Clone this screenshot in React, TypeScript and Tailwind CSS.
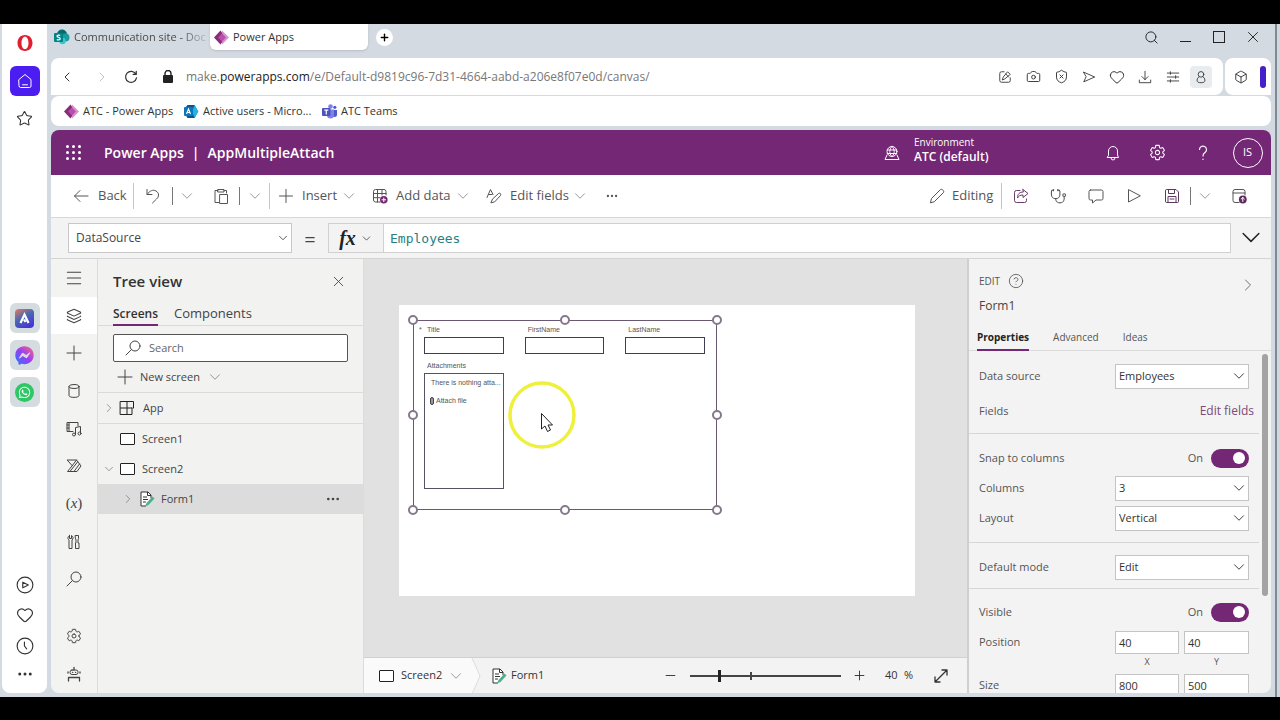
import { type ReactNode, useState } from "react"
import {
  Box,
  Camera,
  ChevronDown,
  ChevronLeft,
  ChevronRight,
  CircleHelp,
  Ellipsis,
  Heart,
  Layers,
  Menu,
  Minus,
  Plus,
  Search,
  ShieldX,
  Star,
  Stethoscope,
  X,
} from "lucide-react"
import { FaFacebookMessenger, FaWhatsapp } from "react-icons/fa"
import { IoSettingsOutline } from "react-icons/io5"

interface IconProps {
  children: ReactNode
  size?: number
  className?: string
}

// 16-unit line icon, drawn with the current text colour
const Icon = ({ children, size = 16, className }: IconProps) => (
  <svg
    width={size}
    height={size}
    viewBox="0 0 16 16"
    fill="none"
    stroke="currentColor"
    strokeLinecap="round"
    strokeLinejoin="round"
    aria-hidden="true"
    className={`shrink-0 ${className ?? ""}`}
  >
    {children}
  </svg>
)

const OperaLogo = () => (
  <svg width="18" height="18" viewBox="0 0 18 18" aria-hidden="true">
    <path
      fill="#e0202f"
      fillRule="evenodd"
      d="M9 1c4.600 0 7.500 3.600 7.500 8S13.600 17 9 17 1.500 13.400 1.500 9 4.400 1 9 1Zm0 1.800C7 2.800 5.500 5.500 5.500 9s1.500 6.200 3.500 6.200 3.500-2.700 3.500-6.200-1.500-6.200-3.500-6.200Z"
    />
  </svg>
)

const PowerAppsLogo = () => (
  <svg width="15" height="15" viewBox="0 0 15 15" className="shrink-0" aria-hidden="true">
    <path fill="#8b2a7d" d="M6.500.4 0 7.500l6.500 7.100L9 11V4Z" />
    <path fill="#d892cf" d="m8 .4 7 7.100-7 7.100Z" />
    <path fill="#b652a6" d="m8 3.200 3.900 4.300L8 11.800 4.200 7.500Z" />
  </svg>
)

const SharePointLogo = () => (
  <svg width="16" height="16" viewBox="0 0 16 16" className="shrink-0" aria-hidden="true">
    <circle cx="8" cy="5.500" r="5" fill="#036c70" />
    <circle cx="11.500" cy="8.500" r="4" fill="#1a9ba1" />
    <circle cx="8.500" cy="12" r="3.200" fill="#37c6d0" />
    <rect y="4" width="9" height="9" rx="1" fill="#038387" />
    <path
      d="M6.200 6.600C5.400 6 3 5.900 3 7.300s3.200.9 3.200 2.400-2.500 1.300-3.400.7"
      fill="none"
      stroke="#fff"
      strokeWidth="1.200"
    />
  </svg>
)

const AdminLogo = () => (
  <svg width="15" height="15" viewBox="0 0 15 15" className="shrink-0" aria-hidden="true">
    <path fill="#0b5394" d="M3.500 1h7L14 7.500 10.500 14h-7L1 10V4Z" />
    <path fill="#28b0e0" d="M10.500 1 14.500 7.500 10.500 14 8 7.500Z" />
    <rect y="3" width="9" height="9" rx="1" fill="#0a78b8" />
    <path d="m2.500 10 2-5 2 5M3.200 8.500h2.600" fill="none" stroke="#fff" strokeWidth="1.100" />
  </svg>
)

const TeamsLogo = () => (
  <svg width="15" height="15" viewBox="0 0 15 15" className="shrink-0" aria-hidden="true">
    <circle cx="8.500" cy="2.500" r="2.300" fill="#7b83eb" />
    <circle cx="12.800" cy="3.300" r="1.600" fill="#5059c9" />
    <path fill="#5059c9" d="M10 6h5v4.500a2.500 2.500 0 0 1-5 0Z" />
    <path fill="#7b83eb" d="M5 5.500h7V11a3.500 3.500 0 0 1-7 0Z" />
    <rect y="4" width="8.500" height="8" rx="1" fill="#4b53bc" />
    <path d="M2.300 6.200h4M4.300 6.200v4.200" stroke="#fff" strokeWidth="1.200" />
  </svg>
)

const FormIcon = () => (
  <svg width="15" height="16" viewBox="0 0 15 16" className="shrink-0" fill="none" aria-hidden="true">
    <path d="M11 7V4L8 1H1v14h5" stroke="#333" fill="#fff" />
    <path d="M7.500 1v3.500H11M3 6h4M3 8.500h5M3 11h3" stroke="#333" />
    <path d="m12.500 5.500 2 2-6 6.500-3.500 1.500 1.500-3.500Z" fill="#4fae91" />
  </svg>
)

const ScreenIcon = () => (
  <span className="h-3 w-[15px] shrink-0 rounded-[1px] border border-[#222] bg-white" />
)

const IconButton = ({
  label,
  className,
  children,
}: {
  label: string
  className: string
  children: ReactNode
}) => (
  <button type="button" aria-label={label} className={`flex shrink-0 items-center justify-center ${className}`}>
    {children}
  </button>
)

const BrowserSidebar = () => (
  <nav className="flex w-[45px] shrink-0 flex-col items-center rounded-b-lg bg-white pb-[6px] text-[#333]">
    <IconButton label="Opera menu" className="h-[38px] w-full">
      <OperaLogo />
    </IconButton>
    <IconButton label="Home" className="mt-1 size-[30px] rounded-md bg-[#4b1df0] text-white">
      <Icon>
        <path d="M2 6.500 8 1.500l6 5V13a1.500 1.500 0 0 1-1.500 1.500h-9A1.500 1.500 0 0 1 2 13ZM5.500 11.800h5" />
      </Icon>
    </IconButton>
    <IconButton label="Favourites" className="mt-1 h-[37px] w-full">
      <Star size={17} strokeWidth={1.5} />
    </IconButton>

    <div className="mt-[166px] flex flex-col gap-[7px]">
      <IconButton label="Aria" className="size-[30px] rounded-md bg-[#d4dce0]">
        <svg width="19" height="19" viewBox="0 0 19 19" aria-hidden="true">
          <defs>
            <linearGradient id="aria" x1="0" y1="0" x2="0.600" y2="1">
              <stop offset="0" stopColor="#e87a5c" />
              <stop offset="0.500" stopColor="#4c68b0" />
              <stop offset="1" stopColor="#4636d8" />
            </linearGradient>
          </defs>
          <rect width="19" height="19" rx="4" fill="url(#aria)" />
          <path d="M5.500 14 9.500 5.500l4 8.500M9 10.500l1.500 2.500" fill="none" stroke="#fff" strokeWidth="2.200" />
        </svg>
      </IconButton>
      <IconButton label="Messenger" className="size-[30px] rounded-md bg-[#d4dce0]">
        <svg width="0" height="0" className="absolute" aria-hidden="true">
          <defs>
            <linearGradient id="messenger" x1="0" y1="1" x2="1" y2="0">
              <stop offset="0" stopColor="#1f7bff" />
              <stop offset="0.500" stopColor="#9a3df5" />
              <stop offset="1" stopColor="#ff6a7a" />
            </linearGradient>
          </defs>
        </svg>
        <FaFacebookMessenger size={19} fill="url(#messenger)" />
      </IconButton>
      <IconButton label="WhatsApp" className="size-[30px] rounded-md bg-[#d4dce0]">
        <span className="flex size-[19px] items-center justify-center rounded-full bg-[#2fc765] text-white">
          <FaWhatsapp size={13} />
        </span>
      </IconButton>
    </div>

    <div className="mt-auto flex flex-col">
      <IconButton label="Player" className="h-[30px] w-8">
        <Icon size={18}>
          <circle cx="8" cy="8" r="7" />
          <path d="M6 5.500v5L11 8Z" />
        </Icon>
      </IconButton>
      <IconButton label="Pinboards" className="h-[30px] w-8">
        <Heart size={18} strokeWidth={1.5} />
      </IconButton>
      <IconButton label="History" className="h-[31px] w-8">
        <Icon size={18}>
          <circle cx="8" cy="8" r="7" />
          <path d="M7.500 4.500V8l2 2.500" />
        </Icon>
      </IconButton>
      <IconButton label="More" className="h-[26px] w-8">
        <Ellipsis size={18} />
      </IconButton>
    </div>
  </nav>
)

const TabStrip = () => (
  <div className="flex h-[34px] shrink-0 items-start text-[11px] text-[#444]">
    <button type="button" className="ml-[3px] flex h-[26px] w-[153px] items-center gap-1">
      <SharePointLogo />
      <span className="bg-gradient-to-r from-[#444] from-80% to-[#44444433] bg-clip-text whitespace-nowrap text-transparent">
        Communication site - Doc
      </span>
    </button>
    <button
      type="button"
      className="ml-[3px] flex h-[26px] w-[158px] items-center gap-1 rounded-b-md bg-white pl-1 text-[#333] shadow"
    >
      <PowerAppsLogo />
      Power Apps
    </button>
    <IconButton label="New tab" className="mt-[5px] ml-2 size-[17px] rounded-full bg-white text-black">
      <Plus size={11} strokeWidth={3} />
    </IconButton>
    <div className="ml-auto flex pr-px text-[#222]">
      <IconButton label="Search tabs" className="h-[26px] w-[34px]">
        <Search size={15} strokeWidth={1.5} />
      </IconButton>
      <IconButton label="Minimize" className="h-[26px] w-[34px]">
        <span className="mt-[9px] h-px w-[11px] bg-[#222]" />
      </IconButton>
      <IconButton label="Maximize" className="h-[26px] w-[34px]">
        <span className="size-[12px] border border-[#222]" />
      </IconButton>
      <IconButton label="Close" className="h-[26px] w-[34px]">
        <X size={18} strokeWidth={1.250} />
      </IconButton>
    </div>
  </div>
)

const AddressBar = () => (
  <div className="flex h-[37px] shrink-0 gap-[2px] text-[#333]">
    <div className="flex flex-1 items-center rounded-t-lg rounded-br-lg bg-white pr-2">
      <IconButton label="Back" className="ml-1 h-6 w-6">
        <ChevronLeft size={16} strokeWidth={1.5} />
      </IconButton>
      <IconButton label="Forward" className="ml-[11px] h-6 w-6 text-[#c4c4c4]">
        <ChevronRight size={16} strokeWidth={1.5} />
      </IconButton>
      <IconButton label="Reload" className="ml-[5px] h-6 w-6">
        <Icon size={14}>
          <path strokeWidth="1.400" d="M13.500 4.500A6.300 6.300 0 1 0 14.300 9M14 1.500v3.500h-3.500" />
        </Icon>
      </IconButton>
      <svg width="12" height="13" viewBox="0 0 12 13" className="ml-[19px] shrink-0" aria-hidden="true">
        <rect x="1" y="5" width="10" height="8" rx="1" fill="#222" />
        <path d="M3 5.500V3.500a3 3 0 0 1 6 0v2" fill="none" stroke="#222" strokeWidth="1.400" />
      </svg>
      <p className="ml-3 flex-1 whitespace-nowrap text-[12px] text-[#777]">
        make.<span className="text-[#222]">powerapps.com</span>/e/Default-d9819c96-7d31-4664-aabd-a206e8f07e0d/canvas/
      </p>
      <IconButton label="Edit page" className="h-6 w-7">
        <Icon size={14}>
          <path d="M7 2H4a2 2 0 0 0-2 2v8a2 2 0 0 0 2 2h8a2 2 0 0 0 2-2V9M5 11l1-3 5-6 3 3-6 5ZM9 4.500 12 8" />
        </Icon>
      </IconButton>
      <IconButton label="Snapshot" className="h-6 w-7">
        <Camera size={15} strokeWidth={1.5} />
      </IconButton>
      <IconButton label="Ad blocker" className="h-6 w-7">
        <ShieldX size={15} strokeWidth={1.5} />
      </IconButton>
      <IconButton label="Flow" className="h-6 w-7">
        <Icon size={14}>
          <path d="M2 2.500 14.500 8 2 13.500 4.500 8Z" />
        </Icon>
      </IconButton>
      <IconButton label="Add to pinboard" className="h-6 w-7">
        <Heart size={16} strokeWidth={1.5} />
      </IconButton>
      <IconButton label="Downloads" className="h-6 w-7">
        <Icon size={14}>
          <path d="M8 1.500V11M4.500 7.500 8 11l3.500-3.500M1.500 11.500v3h13v-3" />
        </Icon>
      </IconButton>
      <IconButton label="Easy setup" className="h-6 w-7">
        <Icon size={14}>
          <path d="M1.500 3.500h13M1.500 8h13M1.500 12.500h13M5 2v3M11 6.500v3M5 11v3" />
        </Icon>
      </IconButton>
      <IconButton label="Account" className="h-6 w-7">
        <span className="flex size-[22px] items-center justify-center rounded bg-[#e9ecee]">
          <Icon size={14}>
            <circle cx="8" cy="5" r="3.200" />
            <path d="M5.500 8A4 4 0 0 0 3.500 11.500C3.500 14 5 14.500 8 14.500s4.500-.5 4.500-3A4 4 0 0 0 10.500 8" />
          </Icon>
        </span>
      </IconButton>
    </div>
    <div className="flex w-[46px] items-center rounded-t-lg rounded-bl-lg bg-white pl-1">
      <IconButton label="Extensions" className="h-6 w-6">
        <Box size={14} strokeWidth={1.600} />
      </IconButton>
      <span className="ml-[7px] h-[22px] w-[6px] rounded-full bg-[#4420c8]" />
    </div>
  </div>
)

const Bookmarks = () => (
  <div className="mt-px flex h-[30px] shrink-0 items-center rounded-lg bg-white pl-[13px] text-[11px] text-[#333]">
    <a href="#atc" className="flex w-[120px] items-center gap-1 whitespace-nowrap">
      <PowerAppsLogo />
      ATC - Power Apps
    </a>
    <a href="#users" className="flex w-[138px] items-center gap-1 whitespace-nowrap">
      <AdminLogo />
      Active users - Micro...
    </a>
    <a href="#teams" className="flex items-center gap-1 whitespace-nowrap">
      <TeamsLogo />
      ATC Teams
    </a>
  </div>
)

const AppHeader = () => (
  <header className="mt-1 flex h-[45px] shrink-0 items-center rounded-t-lg bg-[#742774] text-white">
    <button type="button" aria-label="App launcher" className="ml-[15px] grid grid-cols-3 gap-[3px]">
      {[0, 1, 2, 3, 4, 5, 6, 7, 8].map((n) => (
        <span key={n} className="size-[3px] rounded-full bg-white" />
      ))}
    </button>
    <h1 className="ml-[23px] flex gap-2 text-[14px] font-semibold">
      <span>Power Apps</span>
      <span>|</span>
      <span>AppMultipleAttach</span>
    </h1>
    <button type="button" className="ml-auto flex w-[206px] items-center gap-[14px] text-left">
      <Icon>
        <circle cx="8" cy="6.500" r="5" />
        <path d="M8 1.500c-3 3-3 7 0 10 3-3 3-7 0-10ZM3.300 5h9.400M3.300 8.500h9.400M3 10l-2 4.500h14L13 10" />
      </Icon>
      <span className="flex flex-col pb-[6px]">
        <span className="text-[10px] leading-[14px]">Environment</span>
        <span className="text-[12px] leading-4 font-semibold">ATC (default)</span>
      </span>
    </button>
    <IconButton label="Notifications" className="h-full w-[45px]">
      <Icon>
        <path d="M2.500 12.500h11L12.500 10V6a4.500 4.500 0 0 0-9 0v4ZM6 13a2 2 0 0 0 4 0" />
      </Icon>
    </IconButton>
    <IconButton label="Settings" className="h-full w-[45px]">
      <IoSettingsOutline size={17} />
    </IconButton>
    <IconButton label="Help" className="h-full w-[45px]">
      <Icon>
        <path strokeWidth="1.200" d="M4.500 4.500a3.500 3.500 0 1 1 5.500 3C8.500 8.500 8 9 8 11M8 14v.5" />
      </Icon>
    </IconButton>
    <IconButton label="Account" className="mr-px h-full w-[45px]">
      <span className="flex size-[30px] items-center justify-center rounded-full border border-white text-[11px]">IS</span>
    </IconButton>
  </header>
)

const TallRule = () => <span className="h-[26px] w-px shrink-0 bg-[#c4c4c4]" />
const ShortRule = () => <span className="h-[18px] w-px shrink-0 bg-[#777]" />

const Chevron = () => <ChevronDown size={18} strokeWidth={1} className="-mx-px shrink-0 text-[#777]" />

const CommandBar = () => (
  <div className="flex h-[43px] shrink-0 items-center border-b border-[#d8d8d8] bg-white text-[13px] text-[#555]">
    <button type="button" className="ml-[22px] flex w-[60px] items-center gap-[9px]">
      <Icon>
        <path d="M15 8H1.500M7 2.500 1.500 8 7 13.500" />
      </Icon>
      Back
    </button>
    <TallRule />
    <IconButton label="Undo" className="w-[38px]">
      <Icon>
        <path d="M2 1.500V6.500H7M2 6.500C5 2.500 8 1.300 11 3c3.500 2 3 6 .5 8L7.500 15" />
      </Icon>
    </IconButton>
    <ShortRule />
    <IconButton label="Undo options" className="w-7">
      <Chevron />
    </IconButton>
    <IconButton label="Paste" className="ml-3 w-4">
      <Icon>
        <path d="M5 2.500H2v12h4M11 2.500h2.500V5M5 1.500h6v2.500H5ZM7 6.500h7.500v9H7Z" />
      </Icon>
    </IconButton>
    <span className="w-[10px]" />
    <ShortRule />
    <IconButton label="Paste options" className="w-[29px]">
      <Chevron />
    </IconButton>
    <TallRule />
    <button type="button" className="ml-2 flex w-[94px] items-center">
      <Icon>
        <path d="M8 1.500v13M1.500 8h13" />
      </Icon>
      <span className="ml-2 w-[39px] text-left">Insert</span>
      <Chevron />
    </button>
    <button type="button" className="flex w-[114px] items-center">
      <Icon>
        <path d="M8 14H3.500A2 2 0 0 1 1.500 12V3.500a2 2 0 0 1 2-2H12a2 2 0 0 1 2 2V7M1.500 5.500H14M1.500 9.700H8M5.500 1.500V14M10 1.500V7" />
        <circle cx="11.800" cy="11.800" r="3.800" fill="#742774" stroke="none" />
        <path stroke="#fff" d="M11.800 10v3.600M10 11.800h3.600" />
      </Icon>
      <span className="ml-2 w-[59px] text-left whitespace-nowrap">Add data</span>
      <Chevron />
    </button>
    <button type="button" className="flex w-[118px] items-center">
      <Icon>
        <path d="m1 9.500 3.500-8 2.500 5M2.500 6.500H6M5 14.500l1.500-3.500 6-5.500c1.500-1 3 .5 2 2L9 13.500Z" />
      </Icon>
      <span className="ml-2 w-[62px] text-left whitespace-nowrap">Edit fields</span>
      <Chevron />
    </button>
    <IconButton label="More commands" className="w-4">
      <Ellipsis size={14} />
    </IconButton>

    <button type="button" className="ml-auto flex w-[72px] items-center gap-[7px]">
      <Icon>
        <path d="m1.500 14.500 1-4 9-9c1.500-1 4 1.500 3 3l-9 9Z" />
      </Icon>
      Editing
    </button>
    <TallRule />
    <IconButton label="Share" className="w-[37px] text-[#6b3a6b]">
      <Icon>
        <path d="M7 2.500H3.500a2 2 0 0 0-2 2v8a2 2 0 0 0 2 2h8a2 2 0 0 0 2-2V11M10 1.500l5 4-5 4V7c-3 0-4.500 1-5.500 3 0-4 2-6 5.500-6Z" />
      </Icon>
    </IconButton>
    <IconButton label="App checker" className="w-[38px]">
      <Stethoscope size={17} strokeWidth={1.5} />
    </IconButton>
    <IconButton label="Comments" className="w-[38px]">
      <Icon>
        <path d="M2.500 2h11a1.500 1.500 0 0 1 1.500 1.500v7a1.500 1.500 0 0 1-1.500 1.500H8l-3.500 3v-3h-2A1.500 1.500 0 0 1 1 10.500v-7A1.500 1.500 0 0 1 2.500 2Z" />
      </Icon>
    </IconButton>
    <IconButton label="Preview" className="w-[38px]">
      <Icon>
        <path d="M2.500 2v12L14 8Z" />
      </Icon>
    </IconButton>
    <IconButton label="Save" className="w-[37px] text-[#5c3a5c]">
      <Icon>
        <path d="M1.500 2.500a1 1 0 0 1 1-1H12L14.500 4v9.500a1 1 0 0 1-1 1h-11a1 1 0 0 1-1-1ZM4.500 1.500v4h6v-4M4 14.500v-6h8v6M6 11h4" />
      </Icon>
    </IconButton>
    <ShortRule />
    <IconButton label="Save options" className="w-7">
      <Chevron />
    </IconButton>
    <IconButton label="Publish" className="mr-[14px] ml-[2px] w-9">
      <Icon>
        <path d="M8 14.500H4a2 2 0 0 1-2-2v-9a2 2 0 0 1 2-2h8a2 2 0 0 1 2 2V7M2 5h12" />
        <circle cx="11.800" cy="11.500" r="3.900" fill="#5c2a5c" stroke="none" />
        <path stroke="#fff" d="M11.800 13.500v-4M10.200 11l1.600-1.500 1.600 1.500" />
      </Icon>
    </IconButton>
  </div>
)

const FormulaBar = () => {
  const [formula, setFormula] = useState("Employees")

  return (
    <div className="flex h-[41px] shrink-0 items-center border-b border-[#d4d4d4] bg-[#f3f3f3] pl-[17px] text-[#444]">
      <div className="grid h-[30px] w-[224px] shrink-0 items-center border border-[#c8c8c8] bg-white">
        <select
          aria-label="Property"
          className="col-start-1 row-start-1 h-full w-full appearance-none pl-[7px] text-[12px] outline-none"
        >
          <option>DataSource</option>
        </select>
        <ChevronDown
          size={14}
          strokeWidth={1.5}
          className="pointer-events-none col-start-1 row-start-1 mr-px justify-self-end"
        />
      </div>
      <span className="w-9 shrink-0 pt-1 text-center text-[20px] leading-none">=</span>
      <button
        type="button"
        aria-label="Functions"
        className="flex h-[30px] w-[56px] shrink-0 items-center justify-center gap-1 border border-[#d0d0d0]"
      >
        <span className="font-['Liberation_Serif',serif] text-[20px] leading-none font-bold text-[#222] italic">fx</span>
        <ChevronDown size={13} strokeWidth={1.5} />
      </button>
      <input
        aria-label="Formula"
        value={formula}
        onChange={(e) => setFormula(e.target.value)}
        className="h-[30px] min-w-0 flex-1 border border-l-0 border-[#d0d0d0] bg-white px-[6px] font-['DejaVu_Sans_Mono',monospace] text-[13px] text-[#2a8080] outline-none"
      />
      <IconButton label="Expand formula bar" className="w-10 text-[#222]">
        <Icon size={18}>
          <path strokeWidth="1.300" d="m1 4 7 7 7-7" />
        </Icon>
      </IconButton>
    </div>
  )
}

const RailButton = ({ label, active, children }: { label: string; active?: boolean; children: ReactNode }) => (
  <IconButton label={label} className={`min-h-0 w-full flex-1 ${active ? "bg-white" : ""}`}>
    {children}
  </IconButton>
)

const LeftRail = () => (
  <nav className="flex w-[47px] shrink-0 flex-col border-r border-[#dcdcdc] bg-[#f3f3f2] text-[#444]">
    <div className="flex h-[339px] flex-col">
      <RailButton label="Menu">
        <Menu size={20} strokeWidth={1.250} />
      </RailButton>
      <RailButton label="Tree view" active>
        <Layers size={16} strokeWidth={1.600} />
      </RailButton>
      <RailButton label="Insert">
        <Icon>
          <path d="M8 1v14M1 8h14" />
        </Icon>
      </RailButton>
      <RailButton label="Data">
        <Icon>
          <ellipse cx="8" cy="3.500" rx="5" ry="2" />
          <path d="M3 3.500v9c0 2.500 10 2.500 10 0v-9" />
        </Icon>
      </RailButton>
      <RailButton label="Media">
        <Icon>
          <path d="M7 10.500H1v-9h11V5M3 1.500v9M1 4h2M1 7h2M9.500 13V6.500l5-1V12" />
          <circle cx="8" cy="13.500" r="1.500" />
          <circle cx="13.500" cy="12.500" r="1.500" />
        </Icon>
      </RailButton>
      <RailButton label="Power Automate">
        <Icon>
          <path d="M1.500 2H10.500L15 8l-4 5.500H1.500L6 8ZM6 8 10.500 2M4 13.500l7.500-9.500M8 13.500 13.500 6" />
        </Icon>
      </RailButton>
      <RailButton label="Variables">
        <span className="font-['Liberation_Serif',serif] text-[15px] leading-none">
          (<i>x</i>)
        </span>
      </RailButton>
      <RailButton label="Advanced tools">
        <Icon>
          <path d="M3.500 1.500v3h2v-3C7.500 2.500 7.500 5 6 6v8.500H3V6C1.500 5 1.500 2.500 3.500 1.500ZM9.500 1.500h3v3L12 6v3h1v5.500H9.500V9h.500V6l-.5-1.500Z" />
        </Icon>
      </RailButton>
      <RailButton label="Search">
        <Icon>
          <circle cx="10" cy="6" r="5" />
          <path d="M6.500 9.500 1 15" />
        </Icon>
      </RailButton>
    </div>
    <div className="mt-auto flex h-[76px] flex-col">
      <RailButton label="Settings">
        <IoSettingsOutline size={16} />
      </RailButton>
      <RailButton label="Virtual agent">
        <Icon>
          <rect x="4" y="4" width="8" height="4.500" rx="2" />
          <path d="M8 1.500V4M6.500 6.300h.2M9.500 6.300h.2M2.500 15v-3.500h11V15M2 6v1M14 6v1" strokeWidth="1.300" />
        </Icon>
      </RailButton>
    </div>
  </nav>
)

const TreeView = () => (
  <aside className="flex w-[266px] shrink-0 flex-col border-r border-[#dcdcdc] bg-[#f2f2f1] text-[11px] text-[#444]">
    <div className="flex h-[45px] shrink-0 items-center justify-between pr-4 pl-[15px]">
      <h2 className="text-[15px] font-semibold text-[#333]">Tree view</h2>
      <button type="button" aria-label="Close tree view">
        <X size={17} strokeWidth={1.250} />
      </button>
    </div>
    <div className="flex h-[22px] shrink-0 gap-4 border-b border-[#dadada] pl-[15px] text-[13px]">
      <button
        type="button"
        className="flex h-[22px] items-center border-b-2 border-[#742774] text-[12px] font-semibold text-[#333]"
      >
        Screens
      </button>
      <button type="button" className="flex h-[22px] items-center pb-[2px]">
        Components
      </button>
    </div>
    <label className="mx-[15px] mt-2 flex h-7 shrink-0 items-center gap-2 rounded-[2px] border border-[#555] bg-white pl-[11px]">
      <Icon>
        <circle cx="10" cy="6" r="5" />
        <path d="M6.500 9.500 1 15" />
      </Icon>
      <input
        type="text"
        aria-label="Search"
        placeholder="Search"
        className="min-w-0 flex-1 outline-none placeholder:text-[#666]"
      />
    </label>
    <button
      type="button"
      className="flex h-[31px] shrink-0 items-center gap-[7px] border-b border-[#dadada] pl-[19px] text-left"
    >
      <Icon>
        <path d="M8 1v14M1 8h14" />
      </Icon>
      New screen
      <Chevron />
    </button>
    <ul>
      <li className="flex h-[31px] items-center border-b border-[#dadada] pl-1">
        <ChevronRight size={14} strokeWidth={1.250} className="text-[#777]" />
        <Icon className="ml-[3px] text-[#222]">
          <path d="M1.500 1.500h6.500v13H1.500ZM1.500 8H13M8 1.500h6.500V8M13 8v6.500H8" />
        </Icon>
        <span className="ml-2">App</span>
      </li>
      <li className="flex h-[30px] items-center gap-[7px] pl-[22px]">
        <ScreenIcon />
        Screen1
      </li>
      <li className="flex h-[30px] items-center pl-1">
        <ChevronDown size={14} strokeWidth={1.250} className="mr-1 text-[#777]" />
        <ScreenIcon />
        <span className="ml-[7px]">Screen2</span>
      </li>
      <li className="flex h-[30px] items-center bg-[#dcdcdc] pr-[22px] pl-[23px]">
        <ChevronRight size={14} strokeWidth={1.250} className="mr-[5px] text-[#777]" />
        <FormIcon />
        <span className="ml-[6px] flex-1">Form1</span>
        <button type="button" aria-label="Form1 options">
          <Ellipsis size={16} />
        </button>
      </li>
    </ul>
  </aside>
)

// the artboard is drawn at 40 % zoom, so its text is tiny
const FormField = ({ label, required }: { label: string; required?: boolean }) => (
  <label className="flex flex-col pr-[11px] pl-[10px] text-[7px] leading-[10px] text-[#555]">
    <span className="relative pl-[3px]">
      {required && <span className="absolute -left-[5px]">*</span>}
      {label}
    </span>
    <input type="text" className="mt-[2px] h-[17px] w-full border border-[#3f3d50] bg-white" />
  </label>
)

const HANDLES = [
  "left-0 top-0",
  "left-1/2 top-0",
  "left-full top-0",
  "left-0 top-1/2",
  "left-full top-1/2",
  "left-0 top-full",
  "left-1/2 top-full",
  "left-full top-full",
]

const Artboard = () => (
  <div className="relative h-[291px] w-full bg-white font-['Liberation_Sans',sans-serif]">
    <div className="absolute top-[15px] left-[14px] h-[190px] w-[304px] border border-[#6a5872]">
      <div className="grid grid-cols-3 pt-1">
        <FormField label="Title" required />
        <FormField label="FirstName" />
        <FormField label="LastName" />
      </div>
      <div className="mt-[7px] w-1/3 pr-[11px] pl-[10px] text-[7px] leading-[10px] text-[#555]">
        <p className="pl-[3px]">Attachments</p>
        <div className="mt-[2px] h-[116px] border border-[#555368] pt-1 whitespace-nowrap">
          <p className="pl-[6px]">There is nothing atta...</p>
          <button type="button" className="mt-2 flex items-center gap-[2px] pl-[5px]">
            <span className="h-2 w-1 rounded-full border border-[#444] bg-[#999]" />
            Attach file
          </button>
        </div>
      </div>
      <div className="pointer-events-none absolute -inset-px">
        {HANDLES.map((place) => (
          <span
            key={place}
            className={`absolute size-[10px] -translate-x-1/2 -translate-y-1/2 rounded-full border-2 border-[#85788c] bg-white ${place}`}
          />
        ))}
      </div>
    </div>
    <svg width="68" height="68" viewBox="0 0 68 68" className="absolute top-[76px] left-[109px]" aria-hidden="true">
      <circle cx="34" cy="34" r="32" fill="none" stroke="#eef03c" strokeWidth="3.500" />
      <path d="M33.500 32.500v15.500l3.500-3 2.500 5.500 3-1.500-2.500-5h4.500Z" fill="#fff" stroke="#222" />
    </svg>
  </div>
)

const StatusBar = () => {
  const [zoom, setZoom] = useState(40)

  return (
    <div className="flex h-9 shrink-0 items-center border-t border-[#d0d0d0] bg-[#f3f3f3] text-[11px] text-[#333]">
      <button type="button" className="flex h-full w-[106px] items-center bg-[#fafafa] pl-[15px]">
        <ScreenIcon />
        <span className="mr-[6px] ml-[7px]">Screen2</span>
        <Chevron />
      </button>
      <svg width="12" height="36" viewBox="0 0 12 36" className="shrink-0" aria-hidden="true">
        <path d="M0 0h2l8 18-8 18H0Z" fill="#fafafa" />
        <path d="m2 0 8 18-8 18" fill="none" stroke="#dcdcdc" />
      </svg>
      <button type="button" className="ml-[10px] flex items-center gap-1">
        <FormIcon />
        Form1
      </button>
      <IconButton label="Zoom out" className="ml-auto w-6">
        <Minus size={15} strokeWidth={1.500} />
      </IconButton>
      <div className="ml-2 grid w-[151px] items-center">
        <input
          type="range"
          aria-label="Zoom"
          min={11}
          max={165}
          value={zoom}
          onChange={(e) => setZoom(Number(e.target.value))}
          className="col-start-1 row-start-1 h-[2px] w-full appearance-none bg-[#444] [&::-webkit-slider-thumb]:h-[12px] [&::-webkit-slider-thumb]:w-[3px] [&::-webkit-slider-thumb]:appearance-none [&::-webkit-slider-thumb]:bg-[#222]"
        />
        <span className="pointer-events-none col-start-1 row-start-1 ml-[60px] h-2 w-[2px] bg-[#444]" />
      </div>
      <IconButton label="Zoom in" className="ml-[6px] w-6">
        <Plus size={15} strokeWidth={1.500} />
      </IconButton>
      <span className="ml-[14px] w-[19px]">{zoom}</span>
      <span className="w-[21px]">%</span>
      <IconButton label="Fit to window" className="mr-[14px] ml-1 w-6">
        <Icon>
          <path strokeWidth="1.300" d="M2 14 14 2M9 2h5v5M2 9v5h5" />
        </Icon>
      </IconButton>
    </div>
  )
}

const PropertyRow = ({ label, htmlFor, children }: { label: string; htmlFor?: string; children: ReactNode }) => (
  <div className="flex h-[30px] items-center justify-between">
    <label htmlFor={htmlFor}>{label}</label>
    {children}
  </div>
)

const PropertySelect = ({ id, value }: { id: string; value: string }) => (
  <div className="grid h-[25px] w-[134px] items-center border border-[#c4c4c4] bg-white text-[#333]">
    <select id={id} className="col-start-1 row-start-1 h-full w-full appearance-none pl-[3px] outline-none">
      <option>{value}</option>
    </select>
    <ChevronDown
      size={18}
      strokeWidth={1.250}
      className="pointer-events-none col-start-1 row-start-1 justify-self-end"
    />
  </div>
)

const Toggle = ({ id }: { id: string }) => {
  const [on, setOn] = useState(true)

  return (
    <span className="flex items-center gap-2">
      {on ? "On" : "Off"}
      <input
        id={id}
        type="checkbox"
        checked={on}
        onChange={(e) => setOn(e.target.checked)}
        className="flex h-[19px] w-[38px] appearance-none items-center rounded-full bg-[#999] px-[4px] before:size-[12px] before:rounded-full before:bg-white checked:justify-end checked:bg-[#742774]"
      />
    </span>
  )
}

const NumberPair = ({ name, values }: { name: string; values: [string, string] }) => (
  <div className="flex gap-[5px] text-[#333]">
    <input
      id={name}
      defaultValue={values[0]}
      className="h-[23px] w-16 border border-[#c4c4c4] bg-white px-[3px] outline-none"
    />
    <input
      aria-label={`${name} second value`}
      defaultValue={values[1]}
      className="h-[23px] w-[65px] border border-[#c4c4c4] bg-white px-[3px] outline-none"
    />
  </div>
)

const PropertiesPanel = () => (
  <aside className="flex w-[304px] shrink-0 flex-col overflow-hidden rounded-br-md border-l-2 border-[#cfcfcf] bg-[#f3f3f3] text-[11px] text-[#555]">
    <div className="flex shrink-0 items-start justify-between pt-[11px] pr-[13px] pl-[10px]">
      <div>
        <p className="flex h-[22px] items-center gap-2 text-[10px]">
          EDIT
          <CircleHelp size={16} strokeWidth={1.250} />
        </p>
        <p className="mt-1 text-[12px] leading-5 text-[#444]">Form1</p>
      </div>
      <button type="button" aria-label="Collapse panel" className="mt-[5px]">
        <ChevronRight size={20} strokeWidth={1} />
      </button>
    </div>
    <div className="mt-[10px] flex h-[25px] shrink-0 border-b border-[#dadada] pl-2 text-[10px]">
      <button type="button" className="mr-6 h-[25px] border-b-2 border-[#742774] font-bold text-[#222]">
        Properties
      </button>
      <button type="button" className="mr-6 h-[25px] border-b-2 border-transparent">
        Advanced
      </button>
      <button type="button" className="h-[25px] border-b-2 border-transparent">
        Ideas
      </button>
    </div>
    <div className="flex min-h-0 flex-1 gap-[3px] overflow-hidden">
      <div className="min-w-0 flex-1">
        <div className="border-b border-[#d6d6d6] pt-[10px] pr-[10px] pb-[7px] pl-[10px]">
          <PropertyRow label="Data source" htmlFor="source">
            <PropertySelect id="source" value="Employees" />
          </PropertyRow>
          <div className="mt-[5px] -mr-[5px] flex h-[30px] items-center justify-between">
            <span>Fields</span>
            <a href="#fields" className="text-[12px] text-[#7a4a7a]">
              Edit fields
            </a>
          </div>
        </div>
        <div className="border-b border-[#d6d6d6] px-[10px] py-[9px]">
          <PropertyRow label="Snap to columns" htmlFor="snap">
            <Toggle id="snap" />
          </PropertyRow>
          <PropertyRow label="Columns" htmlFor="columns">
            <PropertySelect id="columns" value="3" />
          </PropertyRow>
          <PropertyRow label="Layout" htmlFor="layout">
            <PropertySelect id="layout" value="Vertical" />
          </PropertyRow>
        </div>
        <div className="border-b border-[#d6d6d6] px-[10px] pt-[9px] pb-[6px]">
          <PropertyRow label="Default mode" htmlFor="mode">
            <PropertySelect id="mode" value="Edit" />
          </PropertyRow>
        </div>
        <div className="px-[10px] pt-2">
          <PropertyRow label="Visible" htmlFor="visible">
            <Toggle id="visible" />
          </PropertyRow>
          <PropertyRow label="Position" htmlFor="position">
            <NumberPair name="position" values={["40", "40"]} />
          </PropertyRow>
          <div className="flex h-[13px] justify-end gap-[5px] text-center text-[9px] leading-[10px]">
            <span className="w-16">X</span>
            <span className="w-[65px]">Y</span>
          </div>
          <PropertyRow label="Size" htmlFor="size">
            <NumberPair name="size" values={["800", "500"]} />
          </PropertyRow>
        </div>
      </div>
      <span className="mt-[3px] mr-[3px] h-[242px] w-[6px] rounded-full bg-[#a3a3a3]" />
    </div>
  </aside>
)

export default function App() {
  return (
    <div className="flex h-screen flex-col overflow-hidden bg-black pt-6 pb-[23px] font-['Open_Sans',sans-serif]">
      <div className="flex min-h-0 flex-1 gap-1 bg-[#d3dae1] pb-1 pl-[2px]">
        <BrowserSidebar />
        <div className="flex min-w-0 flex-1 flex-col">
          <TabStrip />
          <AddressBar />
          <Bookmarks />
          <AppHeader />
          <CommandBar />
          <FormulaBar />
          <div className="flex min-h-0 flex-1 overflow-hidden rounded-b-lg">
            <LeftRail />
            <TreeView />
            <main className="flex min-w-0 flex-1 flex-col bg-[#e1e1e1]">
              <div className="min-h-0 flex-1 overflow-hidden pt-[46px] pr-[52px] pl-[35px]">
                <Artboard />
              </div>
              <StatusBar />
            </main>
            <PropertiesPanel />
          </div>
        </div>
        <div className="-mb-1 w-[5px] shrink-0 border-l-2 border-[#7e8b94] bg-[#d0d8de]" />
      </div>
    </div>
  )
}
